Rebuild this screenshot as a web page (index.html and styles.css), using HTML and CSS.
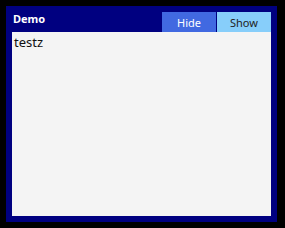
FILE: index.html
```html
<!DOCTYPE html>
<html lang="en">
<head>
    <meta charset="UTF-8">
    <title>Demo</title>
    <link rel="stylesheet" href="styles.css">
</head>
<body>

<div class="panel">
    <div class="header">
        <span class="title">Demo</span>
        <div class="buttons">
            <button class="btn btn-hide">Hide</button>
            <button class="btn btn-show">Show</button>
        </div>
    </div>
    <div class="content">testz</div>
</div>

</body>
</html>
```

FILE: styles.css
```css
body {
    font-family: "Noto Sans", "Open Sans", sans-serif;
    background-color: #000;
    margin: 0;
    padding: 6px;
    height: 228px;
    box-sizing: border-box;
}

.panel {
    background-color: #000080;
    width: 271px;
    height: 216px;
    box-sizing: border-box;
    padding: 6px;
    display: flex;
    flex-direction: column;
}

.header {
    display: flex;
    justify-content: space-between;
    align-items: flex-start;
    height: 20px;
}

.title {
    color: white;
    font-weight: bold;
    font-size: 11px;
    line-height: 14px;
    padding: 0 0 0 1px;
}

.buttons {
    display: flex;
    gap: 1px;
}

.btn {
    width: 54px;
    height: 20px;
    border: none;
    padding: 0;
    font-family: inherit;
    font-size: 11px;
}

.btn-hide {
    background-color: #4169e1;
    color: white;
}

.btn-show {
    background-color: #87cefa;
    color: #222;
}

.content {
    flex: 1;
    background-color: #f4f4f4;
    font-size: 13px;
    line-height: 16px;
    color: #111;
    padding: 2px 2px;
}
```
